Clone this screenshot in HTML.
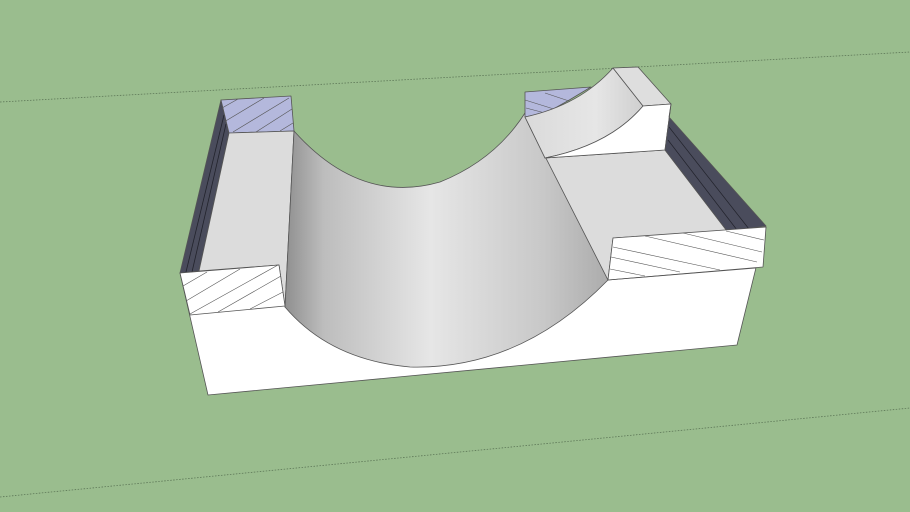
<!DOCTYPE html>
<html><head><style>html,body{margin:0;padding:0;background:#9abd8e;width:910px;height:512px;overflow:hidden}</style></head>
<body>
<svg width="910" height="512" viewBox="0 0 910 512" xmlns="http://www.w3.org/2000/svg">
<defs>
<linearGradient id="cyl" x1="285" y1="0" x2="608" y2="0" gradientUnits="userSpaceOnUse">
<stop offset="0" stop-color="#8f8f8f"/>
<stop offset="0.12" stop-color="#bdbdbd"/>
<stop offset="0.45" stop-color="#e6e6e6"/>
<stop offset="0.8" stop-color="#c8c8c8"/>
<stop offset="1" stop-color="#acacac"/>
</linearGradient>
<linearGradient id="ramp" x1="525" y1="0" x2="643" y2="0" gradientUnits="userSpaceOnUse">
<stop offset="0" stop-color="#dadada"/><stop offset="0.6" stop-color="#e6e6e6"/><stop offset="1" stop-color="#cfcfcf"/>
</linearGradient>
</defs>
<line x1="0" y1="102" x2="910" y2="52" stroke="#5d7757" stroke-width="0.8" stroke-dasharray="1.5 1.5"/>
<line x1="0" y1="497" x2="910" y2="408" stroke="#5d7757" stroke-width="0.8" stroke-dasharray="1.5 1.5"/>
<g stroke="#555" stroke-width="0.8" stroke-linejoin="round">
<!-- white base -->
<polygon points="180,273 208,395 737,345 766,227 727,231 613,238 608,280 285,307 279,265" fill="#fff"/>
<!-- left dark strip -->
<polygon points="221,100 229,133 199,271 180,273" fill="#4a4c5c"/>
<line x1="224" y1="115" x2="186" y2="272" stroke="#22232c"/>
<line x1="226" y1="124" x2="192" y2="272" stroke="#22232c"/>
<!-- left blue top -->
<polygon points="221,100 291,96 294,131 229,133" fill="#b4b8dc"/>
<g stroke="#555" stroke-width="0.6"><line x1="222" y1="108" x2="238" y2="99"/><line x1="224" y1="122" x2="264" y2="98"/><line x1="233" y1="132" x2="289" y2="98"/><line x1="256" y1="132" x2="292" y2="109"/><line x1="280" y1="131" x2="293" y2="123"/></g>
<!-- left gray wall -->
<polygon points="199,271 229,133 294,131 285,307 279,265" fill="#dcdcdc"/>
<!-- left hatched -->
<polygon points="180,273 279,265 285,306 190,315" fill="#fff"/>
<g stroke="#555" stroke-width="0.6"><line x1="183" y1="286" x2="207" y2="272"/><line x1="186" y1="301" x2="240" y2="269"/><line x1="190" y1="314" x2="278" y2="265"/><line x1="218" y1="312" x2="281" y2="276"/><line x1="250" y1="309" x2="283" y2="292"/></g>
<!-- cylinder -->
<path d="M294,131 Q360,205 440,182 Q495,160 525,113 L608,280 Q520,370 410,367 Q330,360 285,307 Z" fill="url(#cyl)"/>
<!-- right middle gray floor -->
<polygon points="525,117 545,158 665,150 727,231 613,238 608,280" fill="#dcdcdc"/>
<!-- right blue -->
<path d="M525,92 L591,87 Q570,100 548,112 L525,117 Z" fill="#b4b8dc"/>
<g stroke="#555" stroke-width="0.6"><line x1="525" y1="100" x2="557" y2="110"/><line x1="526" y1="108" x2="545" y2="113"/><line x1="545" y1="93" x2="572" y2="102"/></g>
<!-- ramp -->
<path d="M525,117 Q580,105 613,68 L643,106 Q610,145 545,158 Z" fill="url(#ramp)"/>
<!-- block top -->
<polygon points="613,68 638,67 671,104 643,106" fill="#dedede"/>
<!-- block white face -->
<path d="M545,158 Q610,145 643,106 L671,104 L665,150 Z" fill="#fff"/>
<!-- right dark strip -->
<polygon points="671,104 669,117 766,226 727,231 665,150" fill="#4a4c5c"/>
<g stroke="#22232c" stroke-width="0.7"><line x1="669" y1="127" x2="749" y2="229"/><line x1="668" y1="140" x2="737" y2="230"/></g>
<!-- right hatched -->
<polygon points="613,238 766,227 763,267 608,280" fill="#fff"/>
<g stroke="#555" stroke-width="0.6"><line x1="613" y1="247" x2="720" y2="270"/><line x1="611" y1="257" x2="680" y2="272"/><line x1="610" y1="269" x2="645" y2="276"/><line x1="645" y1="236" x2="757" y2="262"/><line x1="683" y1="233" x2="762" y2="252"/><line x1="726" y1="231" x2="764" y2="240"/></g>
<line x1="608" y1="280" x2="756" y2="268"/>
</g>
</svg>
</body></html>
